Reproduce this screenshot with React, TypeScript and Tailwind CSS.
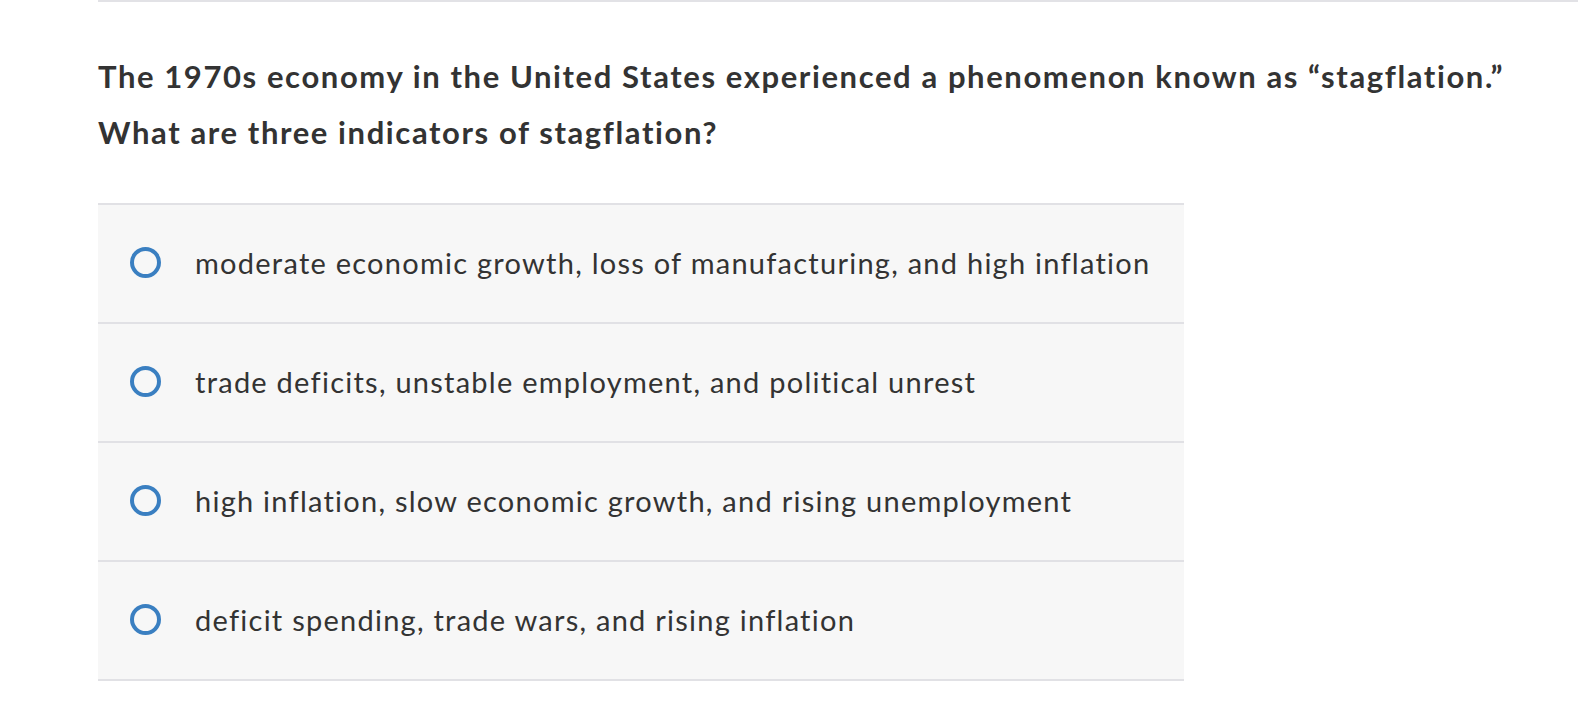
import React from "react";

const options = [
  "moderate economic growth, loss of manufacturing, and high inflation",
  "trade deficits, unstable employment, and political unrest",
  "high inflation, slow economic growth, and rising unemployment",
  "deficit spending, trade wars, and rising inflation",
];

export default function App() {
  return (
    <div
      className="min-h-[724px] bg-white pl-[98px] pr-[12px] [font-variant-ligatures:none]"
      style={{ fontFamily: "Lato, 'Noto Sans', sans-serif" }}
    >
      <div className="h-[2px] bg-[#e2e2e6]" />
      <h1 className="mt-[46px] text-[31px] font-bold leading-[56px] text-[#333333] tracking-[1.6px]">
        The 1970s economy in the United States experienced a phenomenon known as “stagflation.”
        <br />
        What are three indicators of stagflation?
      </h1>
      <div className="mt-[43px] w-[1086px] border-t-2 border-[#e1e1e5]">
        {options.map((o) => (
          <div
            key={o}
            className="flex h-[119px] items-center border-b-2 border-[#e1e1e5] bg-[#f7f7f7] pb-[2px] pl-[32px]"
          >
            <span className="box-border h-[31px] w-[31px] shrink-0 rounded-full border-[4px] border-[#3a7fc1]" />
            <span className="ml-[34px] text-[29px] leading-none text-[#333333] tracking-[1.25px]">{o}</span>
          </div>
        ))}
      </div>
    </div>
  );
}
